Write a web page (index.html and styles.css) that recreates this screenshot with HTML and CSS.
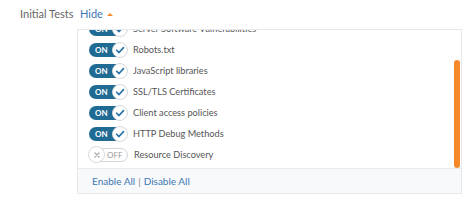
FILE: index.html
```html
<!DOCTYPE html>
<html lang="en">
<head>
  <meta charset="UTF-8">
  <title>Initial Tests</title>
  <link rel="stylesheet" href="styles.css">
</head>
<body>
  <div class="field">
    <div class="field-label">Initial Tests</div>
    <div class="field-body">
      <a href="#" class="toggle-link">Hide <span class="caret"></span></a>

      <!-- Test list panel -->
      <div class="panel">
        <div class="list">
          <div class="list-inner">
            <div class="row">
              <span class="switch on"><span class="label">ON</span><span class="knob"><svg viewBox="0 0 10 10"><path d="M2.2 5.2 L4.2 7.1 L7.9 3"/></svg></span></span>
              <span class="name">Server Software Vulnerabilities</span>
            </div>
            <div class="row">
              <span class="switch on"><span class="label">ON</span><span class="knob"><svg viewBox="0 0 10 10"><path d="M2.2 5.2 L4.2 7.1 L7.9 3"/></svg></span></span>
              <span class="name">Robots.txt</span>
            </div>
            <div class="row">
              <span class="switch on"><span class="label">ON</span><span class="knob"><svg viewBox="0 0 10 10"><path d="M2.2 5.2 L4.2 7.1 L7.9 3"/></svg></span></span>
              <span class="name">JavaScript libraries</span>
            </div>
            <div class="row">
              <span class="switch on"><span class="label">ON</span><span class="knob"><svg viewBox="0 0 10 10"><path d="M2.2 5.2 L4.2 7.1 L7.9 3"/></svg></span></span>
              <span class="name">SSL/TLS Certificates</span>
            </div>
            <div class="row">
              <span class="switch on"><span class="label">ON</span><span class="knob"><svg viewBox="0 0 10 10"><path d="M2.2 5.2 L4.2 7.1 L7.9 3"/></svg></span></span>
              <span class="name">Client access policies</span>
            </div>
            <div class="row">
              <span class="switch on"><span class="label">ON</span><span class="knob"><svg viewBox="0 0 10 10"><path d="M2.2 5.2 L4.2 7.1 L7.9 3"/></svg></span></span>
              <span class="name">HTTP Debug Methods</span>
            </div>
            <div class="row">
              <span class="switch off"><span class="knob"><svg viewBox="0 0 10 10"><path d="M3.3 3.3 L6.7 6.7 M6.7 3.3 L3.3 6.7"/></svg></span><span class="label">OFF</span></span>
              <span class="name">Resource Discovery</span>
            </div>
          </div>
          <div class="scroll-thumb"></div>
        </div>
        <div class="panel-footer">
          <a href="#">Enable All</a><span class="sep">|</span><a href="#">Disable All</a>
        </div>
      </div>
    </div>
  </div>
</body>
</html>
```

FILE: styles.css
```css
* {
  margin: 0;
  padding: 0;
  box-sizing: border-box;
}

body {
  font-family: Lato, "Open Sans", sans-serif;
  background-color: #fff;
  color: #555;
  width: 474px;
  height: 206px;
  overflow: hidden;
}

a {
  color: #3b78b5;
  text-decoration: none;
}

/* Field layout */
.field {
  display: flex;
  padding: 7px 0 0 20px;
}

.field-label {
  width: 57px;
  font-size: 11px;
  color: #666;
  line-height: 14px;
}

.field-body {
  width: 385px;
}

.toggle-link {
  display: block;
  font-size: 11px;
  line-height: 14px;
  margin-left: 3px;
}

.caret {
  display: inline-block;
  width: 0;
  height: 0;
  border-left: 3px solid transparent;
  border-right: 3px solid transparent;
  border-bottom: 3px solid #f58a2c;
  vertical-align: 2px;
  margin-left: 1px;
}

/* Panel */
.panel {
  margin-top: 8px;
  border: 1px solid #e6e8eb;
}

.list {
  position: relative;
  height: 138px;
  overflow: hidden;
}

.list-inner {
  margin-top: -12px;
  padding-left: 11px;
}

.row {
  display: flex;
  align-items: center;
  height: 21px;
}

.name {
  font-size: 9.2px;
  color: #555;
  margin-left: 6px;
}

/* Switches */
.switch {
  display: flex;
  align-items: center;
  width: 38px;
  height: 14px;
  border-radius: 7px;
  position: relative;
}

.switch.on {
  background-color: #1f6b93;
}

.switch.off {
  background-color: #fff;
  border: 1px solid #d3d6da;
  margin-left: 1px;
}

.switch .label {
  font-size: 8px;
  font-weight: bold;
  line-height: 14px;
}

.switch.on .label {
  color: #fff;
  margin-left: 6px;
}

.switch.off .label {
  color: #999;
  font-weight: normal;
  margin-left: 2px;
}

.knob {
  width: 16px;
  height: 16px;
  border-radius: 50%;
  background-color: #fff;
  border: 1px solid #d6d9dc;
  display: flex;
  align-items: center;
  justify-content: center;
}

.switch.on .knob {
  position: absolute;
  right: -1px;
  top: -1px;
}

.switch.off .knob {
  margin-left: -3px;
  width: 17px;
  height: 17px;
}

.knob svg {
  width: 12px;
  height: 12px;
  fill: none;
  stroke-linecap: round;
  stroke-linejoin: round;
}

.switch.on .knob svg {
  stroke: #2a73a8;
  stroke-width: 1.4;
}

.switch.off .knob svg {
  stroke: #aaa;
  stroke-width: 1.1;
}

.scroll-thumb {
  position: absolute;
  right: 1px;
  top: 30px;
  width: 6px;
  height: 108px;
  border-radius: 3px;
  background-color: #f68a2b;
}

/* Footer */
.panel-footer {
  background-color: #f8f9fa;
  border-top: 1px solid #e8eaed;
  height: 25px;
  display: flex;
  align-items: center;
  padding-left: 14px;
  font-size: 10px;
}

.sep {
  color: #888;
  margin: 0 3px;
}
```
